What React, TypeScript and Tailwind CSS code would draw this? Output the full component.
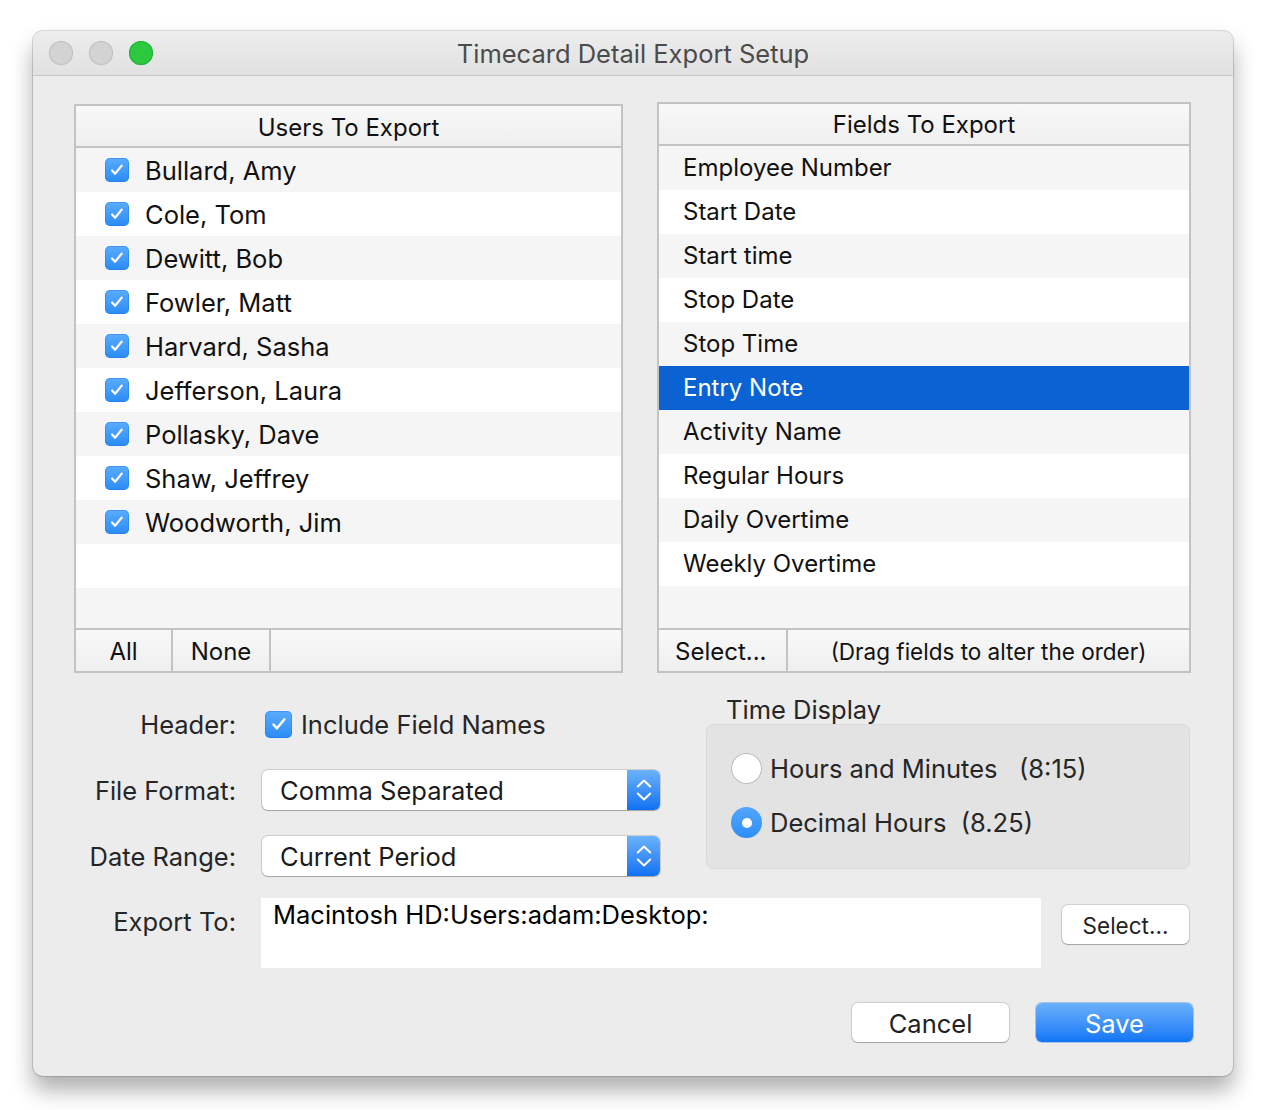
import React from "react"

const users = [
  "Bullard, Amy",
  "Cole, Tom",
  "Dewitt, Bob",
  "Fowler, Matt",
  "Harvard, Sasha",
  "Jefferson, Laura",
  "Pollasky, Dave",
  "Shaw, Jeffrey",
  "Woodworth, Jim",
]

const fields = [
  "Employee Number",
  "Start Date",
  "Start time",
  "Stop Date",
  "Stop Time",
  "Entry Note",
  "Activity Name",
  "Regular Hours",
  "Daily Overtime",
  "Weekly Overtime",
]

const Check = ({ size }: { size: string }) => (
  <span className={`${size} shrink-0 rounded-[5px] bg-gradient-to-b from-[#5aacfc] to-[#2a8cf4] flex items-center justify-center shadow-[inset_0_0_0_1px_rgba(20,110,230,0.35)]`}>
    <svg viewBox="0 0 24 24" className="w-[74%] h-[74%]">
      <path d="M5.5 12.8l4.1 4.4L18.5 6.3" stroke="white" strokeWidth="3" fill="none" strokeLinecap="round" strokeLinejoin="round" />
    </svg>
  </span>
)

const Popup = ({ label }: { label: string }) => (
  <div className="w-[398px] h-[40px] flex rounded-[6px] bg-white shadow-[0_0_0_1px_rgba(0,0,0,0.13),0_1px_1px_rgba(0,0,0,0.2)]">
    <div className="flex-1 flex items-center pl-[18px] pt-[2px] text-[25.5px] text-[#1b1b1b]">{label}</div>
    <div className="w-[33px] rounded-r-[6px] bg-gradient-to-b from-[#6ab2fb] to-[#0d70f2] flex items-center justify-center">
      <svg viewBox="0 0 20 30" className="w-[20px] h-[30px]">
        <path d="M3.8 11.5L10 5.5l6.2 6M3.8 18.5l6.2 6 6.2-6" stroke="white" strokeWidth="2" fill="none" strokeLinecap="round" strokeLinejoin="round" />
      </svg>
    </div>
  </div>
)

const Radio = ({ on }: { on: boolean }) =>
  on ? (
    <span className="w-[31px] h-[31px] shrink-0 rounded-full bg-gradient-to-b from-[#52a6fb] to-[#2d8ef6] flex items-center justify-center">
      <span className="w-[10px] h-[10px] rounded-full bg-white" />
    </span>
  ) : (
    <span className="w-[31px] h-[31px] shrink-0 rounded-full bg-white shadow-[inset_0_0_0_1px_#b9b9b9]" />
  )

const App = () => {
  return (
    <div className="min-h-screen bg-white pt-[31px] pl-[33px] font-[family-name:Inter,_sans-serif] text-[#111]">
      <div className="w-[1200px] h-[1045px] bg-[#ececec] rounded-[10px] flex flex-col overflow-hidden shadow-[0_14px_22px_rgba(0,0,0,0.32),0_0_0_1px_rgba(0,0,0,0.14)]">
        {/* title bar */}
        <div className="h-[45px] shrink-0 flex items-center relative border-b border-[#c6c6c6] bg-gradient-to-b from-[#ededed] to-[#e1e1e1]">
          <div className="flex gap-[16px] pl-[16px]">
            <span className="w-[24px] h-[24px] rounded-full bg-[#d3d3d3] shadow-[inset_0_0_0_1px_#c0c0c0]" />
            <span className="w-[24px] h-[24px] rounded-full bg-[#d3d3d3] shadow-[inset_0_0_0_1px_#c0c0c0]" />
            <span className="w-[24px] h-[24px] rounded-full bg-[#2bc840] shadow-[inset_0_0_0_1px_#22b13a]" />
          </div>
          <div className="absolute inset-0 flex items-center justify-center pt-[3px] text-[25.5px] text-[#4b4b4b] pointer-events-none">
            Timecard Detail Export Setup
          </div>
        </div>

        <div className="flex-1 flex flex-col pl-[41px] pr-[42px]">
          {/* lists */}
          <div className="flex items-start gap-[34px] pt-[26px]">
            <div className="mt-[2px] w-[549px] h-[569px] shrink-0 flex flex-col border-2 border-[#c3c3c3] bg-white">
              <div className="h-[42px] shrink-0 flex items-center justify-center pt-[3px] text-[24px] bg-gradient-to-b from-[#f8f8f8] to-[#efefef] border-b-2 border-[#c3c3c3]">
                Users To Export
              </div>
              <div className="flex-1 overflow-hidden">
                {users.map((u, i) => (
                  <div key={u} className={`h-[44px] flex items-center pl-[29px] gap-[16px] text-[25.5px] ${i % 2 === 0 ? "bg-[#f5f5f5]" : "bg-white"}`}>
                    <Check size="w-[24px] h-[24px]" />
                    <span className="pt-[3px]">{u}</span>
                  </div>
                ))}
                <div className="h-[44px] bg-white" />
                <div className="h-[44px] bg-[#f5f5f5]" />
              </div>
              <div className="h-[43px] shrink-0 flex border-t-2 border-[#c3c3c3] bg-gradient-to-b from-[#f8f8f8] to-[#efefef] text-[24px]">
                <div className="w-[97px] flex items-center justify-center pt-[2px] border-r-2 border-[#c3c3c3]">All</div>
                <div className="w-[98px] flex items-center justify-center pt-[2px] border-r-2 border-[#c3c3c3]">None</div>
                <div className="flex-1" />
              </div>
            </div>

            <div className="w-[534px] h-[571px] shrink-0 flex flex-col border-2 border-[#c3c3c3] bg-white">
              <div className="h-[42px] shrink-0 flex items-center justify-center pt-[1px] text-[24px] bg-gradient-to-b from-[#f8f8f8] to-[#efefef] border-b-2 border-[#c3c3c3]">
                Fields To Export
              </div>
              <div className="flex-1 overflow-hidden">
                {fields.map((f, i) => (
                  <div
                    key={f}
                    className={`h-[44px] flex items-center pl-[24px] text-[24px] ${
                      i === 5 ? "bg-[#0b63d3] text-white" : i % 2 === 0 ? "bg-[#f5f5f5]" : "bg-white"
                    }`}
                  >
                    {f}
                  </div>
                ))}
                <div className="h-[44px] bg-[#f5f5f5]" />
              </div>
              <div className="h-[43px] shrink-0 flex border-t-2 border-[#c3c3c3] bg-gradient-to-b from-[#f8f8f8] to-[#efefef]">
                <div className="w-[129px] flex items-center pl-[16px] pt-[2px] border-r-2 border-[#c3c3c3] text-[24px]">Select...</div>
                <div className="flex-1 flex items-center justify-center pt-[2px] text-[22.5px]">(Drag fields to alter the order)</div>
              </div>
            </div>
          </div>

          {/* options */}
          <div className="flex items-start">
            <div className="w-[586px] shrink-0 flex flex-col pt-[31px] gap-[26px]">
              <div className="h-[40px] flex items-center">
                <div className="w-[162px] pt-[2px] text-right text-[25.5px] text-[#262626]">Header:</div>
                <div className="ml-[29px] flex items-center gap-[9px]">
                  <Check size="w-[27px] h-[27px]" />
                  <span className="pt-[2px] text-[25.5px] text-[#262626]">Include Field Names</span>
                </div>
              </div>
              <div className="h-[40px] flex items-center">
                <div className="w-[162px] pt-[2px] text-right text-[25.5px] text-[#262626]">File Format:</div>
                <div className="ml-[26px]">
                  <Popup label="Comma Separated" />
                </div>
              </div>
              <div className="h-[40px] flex items-center">
                <div className="w-[162px] pt-[2px] text-right text-[25.5px] text-[#262626]">Date Range:</div>
                <div className="ml-[26px]">
                  <Popup label="Current Period" />
                </div>
              </div>
            </div>

            <div className="ml-[46px] w-[484px] pt-[22px] flex flex-col">
              <div className="h-[29px] pl-[20px] text-[25.5px] leading-[29px] text-[#262626]">Time Display</div>
              <div className="h-[145px] rounded-[7px] bg-[#e3e3e3] border border-[#dadada] flex flex-col pl-[24px] pt-[28px] gap-[23px]">
                <div className="h-[31px] flex items-center gap-[8px] text-[25.5px] text-[#262626]">
                  <Radio on={false} />
                  <span className="pt-[2px] whitespace-pre">Hours and Minutes   (8:15)</span>
                </div>
                <div className="h-[31px] flex items-center gap-[8px] text-[25.5px] text-[#262626]">
                  <Radio on={true} />
                  <span className="pt-[2px] whitespace-pre">Decimal Hours  (8.25)</span>
                </div>
              </div>
            </div>
          </div>

          {/* export to */}
          <div className="mt-[22px] flex items-start">
            <div className="w-[162px] pt-[9px] leading-[30px] text-right text-[25.5px] text-[#262626]">Export To:</div>
            <div className="ml-[25px] w-[780px] h-[70px] bg-white pl-[12px] pt-[2px] leading-[30px] text-[25.5px] text-black">
              Macintosh HD:Users:adam:Desktop:
            </div>
            <button className="ml-[21px] mt-[7px] w-[127px] h-[39px] pt-[2px] rounded-[6px] bg-white text-[22.5px] text-[#222] shadow-[0_0_0_1px_rgba(0,0,0,0.12),0_1px_1px_rgba(0,0,0,0.22)]">
              Select...
            </button>
          </div>

          {/* actions */}
          <div className="mt-[35px] -mr-[2px] flex justify-end gap-[27px]">
            <button className="w-[157px] h-[39px] pt-[2px] rounded-[6px] bg-white text-[25.5px] text-[#222] shadow-[0_0_0_1px_rgba(0,0,0,0.12),0_1px_1px_rgba(0,0,0,0.22)]">
              Cancel
            </button>
            <button className="w-[157px] h-[39px] pt-[2px] rounded-[6px] bg-gradient-to-b from-[#69b0fb] to-[#0e75f6] text-[25.5px] text-white shadow-[0_0_0_1px_rgba(10,100,230,0.3)]">
              Save
            </button>
          </div>
        </div>
      </div>
    </div>
  )
}

export default App
